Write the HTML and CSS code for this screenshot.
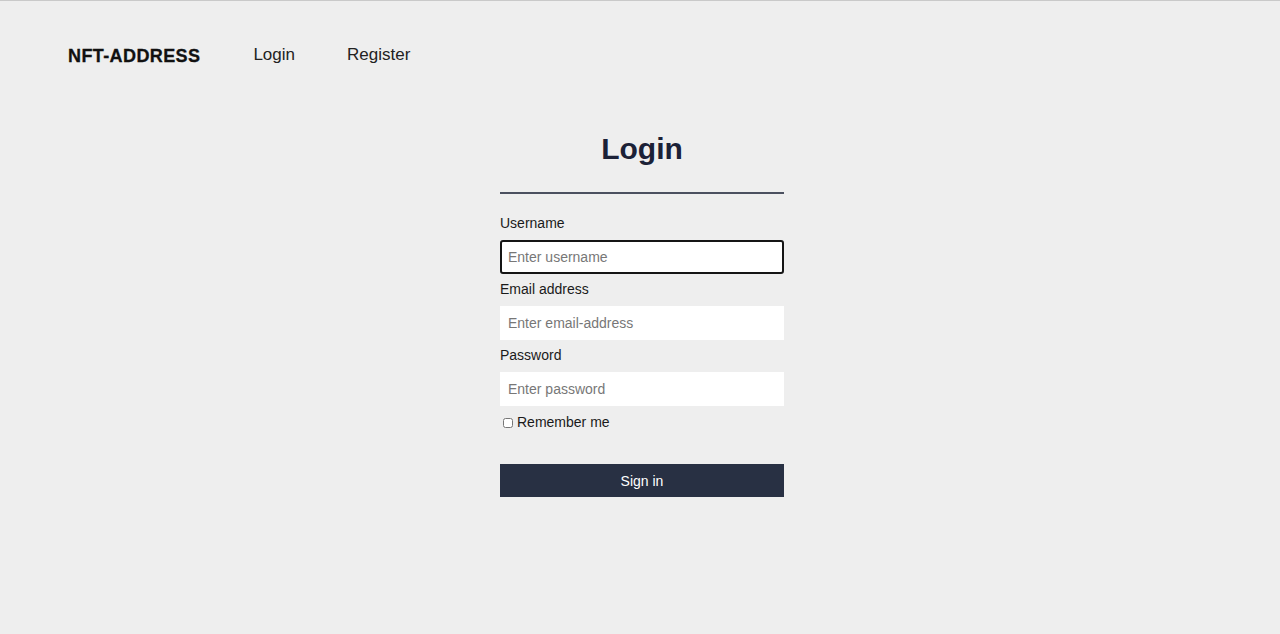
FILE: index.html
```html
<!DOCTYPE html>
<html lang="en">
<head>
<meta charset="utf-8">
<title>NFT-ADDRESS - Login</title>
<link rel="stylesheet" href="styles.css">
</head>
<body>
<header class="nav">
  <a class="logo" href="#">NFT-ADDRESS</a>
  <a class="nav-link" href="#">Login</a>
  <a class="nav-link" href="#">Register</a>
</header>
<main class="main">
  <form class="form">
    <h1 class="title">Login</h1>
    <div class="divider"></div>
    <label class="label" for="u">Username</label>
    <input class="input input-focus" id="u" type="text" placeholder="Enter username">
    <label class="label" for="e">Email address</label>
    <input class="input" id="e" type="email" placeholder="Enter email-address">
    <label class="label" for="p">Password</label>
    <input class="input" id="p" type="password" placeholder="Enter password">
    <label class="remember"><input class="check" type="checkbox">Remember me</label>
    <button class="btn" type="button">Sign in</button>
  </form>
</main>
</body>
</html>
```
FILE: styles.css
```css
html, body {
  margin: 0;
  padding: 0;
}
body {
  background: #eeeeee;
  border-top: 1px solid #c9c9c9;
  font-family: "Liberation Sans", Arial, sans-serif;
  color: #222;
  min-height: 633px;
}
.nav {
  display: flex;
  align-items: center;
  padding: 42px 0 0 68px;
  height: 24px;
}
.logo {
  font-weight: bold;
  font-size: 18px;
  letter-spacing: 0.4px;
  color: #111;
  -webkit-text-stroke: 0.3px #111;
  text-decoration: none;
  margin-right: 53px;
  position: relative;
  top: 1px;
}
.nav-link {
  font-size: 17px;
  color: #222;
  text-decoration: none;
  margin-right: 52px;
}
.main {
  display: flex;
  justify-content: center;
  padding-left: 4px;
  padding-top: 65px;
}
.form {
  width: 284px;
  display: flex;
  flex-direction: column;
}
.title {
  margin: 0;
  font-size: 30px;
  line-height: 34px;
  text-align: center;
  color: #1b2137;
}
.divider {
  margin-top: 26px;
  height: 2px;
  background: #161c30;
  transform: scaleY(0.75);
}
.label {
  margin-top: 21px;
  font-size: 14px;
  line-height: 17px;
  color: #1a1a1a;
}
.label + .input { margin-top: 8px; }
.input + .label { margin-top: 7px; }
.input {
  box-sizing: border-box;
  height: 34px;
  width: 100%;
  border: none;
  background: #fff;
  padding: 0 8px;
  font-family: "Liberation Sans", Arial, sans-serif;
  font-size: 14px;
  color: #222;
  outline: none;
}
.input::placeholder { color: #777; }
.input-focus {
  border: 2px solid #151515;
  border-radius: 3px;
  padding-left: 6px;
}
.remember {
  margin-top: 8px;
  display: flex;
  align-items: center;
  font-size: 14px;
  line-height: 17px;
  color: #1a1a1a;
}
.check {
  margin: 0 4px 0 3px;
  width: 10px;
  height: 10px;
}
.btn {
  margin-top: 33px;
  height: 33px;
  border: none;
  background: #283043;
  color: #fff;
  font-family: "Liberation Sans", Arial, sans-serif;
  font-size: 14px;
  cursor: pointer;
}
```
